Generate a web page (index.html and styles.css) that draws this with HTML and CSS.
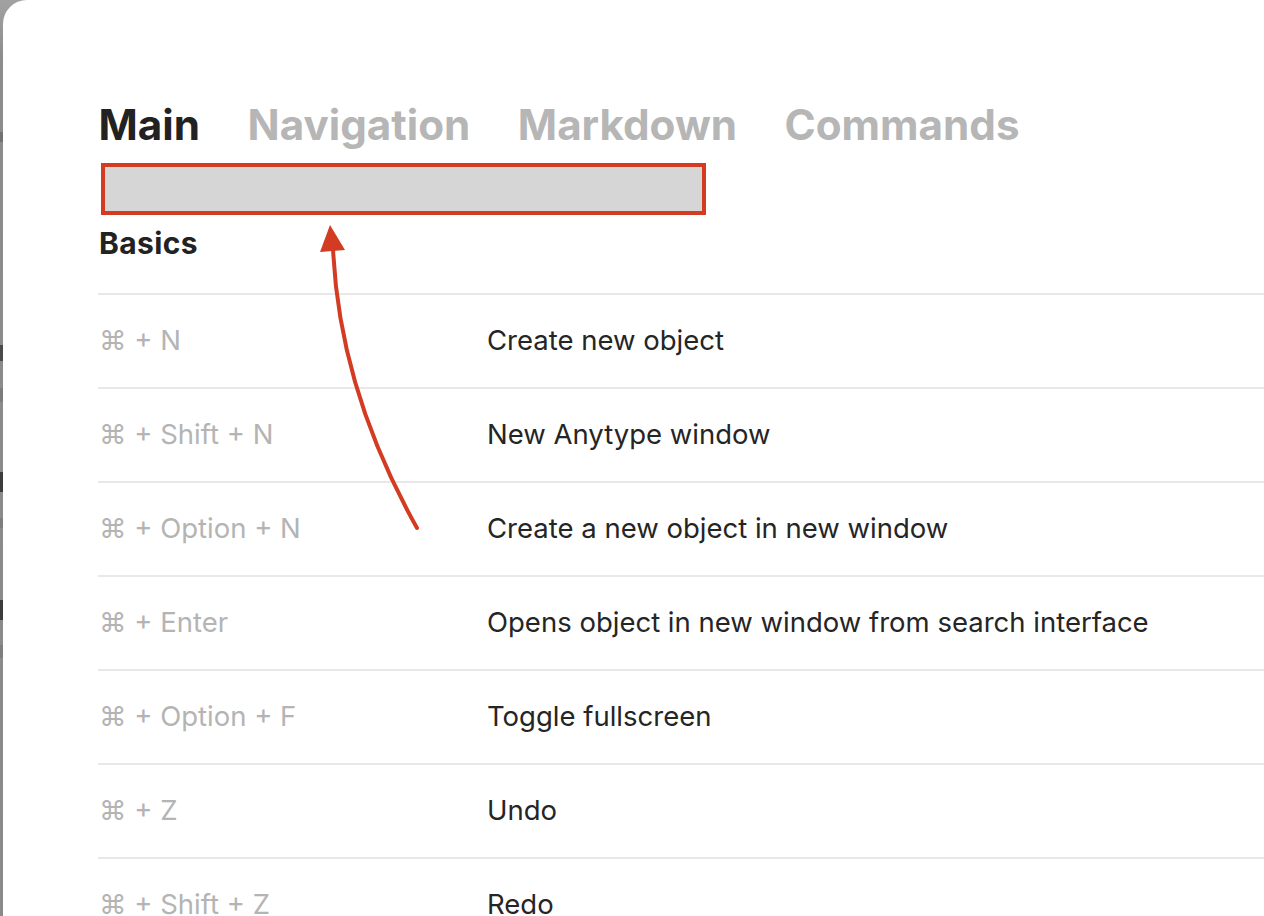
FILE: index.html
```html
<!DOCTYPE html>
<html lang="en">
<head>
<meta charset="utf-8">
<title>Keyboard shortcuts</title>
<link rel="stylesheet" href="styles.css">
</head>
<body>
<div class="modal">
  <nav class="tabs">
    <span class="tab active">Main</span>
    <span class="tab">Navigation</span>
    <span class="tab">Markdown</span>
    <span class="tab">Commands</span>
  </nav>
  <div class="search"></div>
  <h2 class="section-title">Basics</h2>
  <div class="list">
    <div class="row"><span class="keys">⌘ + N</span><span class="desc">Create new object</span></div>
    <div class="row"><span class="keys">⌘ + Shift + N</span><span class="desc">New Anytype window</span></div>
    <div class="row"><span class="keys">⌘ + Option + N</span><span class="desc">Create a new object in new window</span></div>
    <div class="row"><span class="keys">⌘ + Enter</span><span class="desc">Opens object in new window from search interface</span></div>
    <div class="row"><span class="keys">⌘ + Option + F</span><span class="desc">Toggle fullscreen</span></div>
    <div class="row"><span class="keys">⌘ + Z</span><span class="desc">Undo</span></div>
    <div class="row"><span class="keys">⌘ + Shift + Z</span><span class="desc">Redo</span></div>
  </div>
</div>
<svg class="annotation" width="1264" height="916" viewBox="0 0 1264 916" aria-hidden="true">
  <path d="M417 528 Q339 389 333 248" fill="none" stroke="#d33c22" stroke-width="4" stroke-linecap="round"/>
  <polygon points="330,225 320,252 345,250" fill="#d33c22"/>
</svg>
</body>
</html>
```

FILE: styles.css
```css
* { box-sizing: border-box; }

html, body {
  margin: 0;
  height: 100%;
}

body {
  width: 1264px;
  height: 916px;
  overflow: hidden;
  position: relative;
  font-family: Inter, "Noto Sans", "Liberation Sans", sans-serif;
  background:
    linear-gradient(to bottom,
      transparent 0, transparent 132px, #727272 132px, #727272 142px, transparent 142px,
      transparent 345px, #4a4a4a 345px, #4a4a4a 361px, transparent 361px,
      transparent 388px, #7c7c7c 388px, #7c7c7c 402px, transparent 402px,
      transparent 472px, #3c3c3c 472px, #3c3c3c 492px, transparent 492px,
      transparent 518px, #7e7e7e 518px, #7e7e7e 528px, transparent 528px,
      transparent 600px, #3c3c3c 600px, #3c3c3c 620px, transparent 620px,
      transparent 645px, #7e7e7e 645px, #7e7e7e 658px, transparent 658px),
    linear-gradient(to bottom, #a2a2a2 0, #8c8c8c 60px, #8a8a8a 100%);
}

.modal {
  margin-left: 3px;
  width: 1300px;
  height: 916px;
  background: #ffffff;
  border-top-left-radius: 24px;
  padding: 100px 0 0 95px;
}

.tabs {
  display: flex;
  gap: 47.5px;
  font-size: 42.2px;
  line-height: 50px;
  font-weight: 700;
  padding-left: 0.5px;
}

.tab { color: #b6b6b6; }
.tab.active { color: #222222; }

.search {
  margin: 13px 0 0 3px;
  width: 605px;
  height: 52px;
  background: #d6d6d6;
  border: 4px solid #d33c22;
}

.section-title {
  margin: 11px 0 33px 1px;
  font-size: 30px;
  line-height: 34px;
  font-weight: 700;
  letter-spacing: 0.4px;
  color: #222222;
}

.list { display: flex; flex-direction: column; }

.row {
  display: grid;
  grid-template-columns: 389px 1fr;
  height: 94px;
  padding-bottom: 3px;
  border-top: 2px solid #e8e8e8;
  align-items: center;
  font-size: 27.5px;
  line-height: 30px;
}

.keys {
  color: #b4b4b4;
  padding-left: 1px;
}

.desc {
  color: #252525;
}

.annotation {
  position: absolute;
  left: 0;
  top: 0;
  pointer-events: none;
}
```
